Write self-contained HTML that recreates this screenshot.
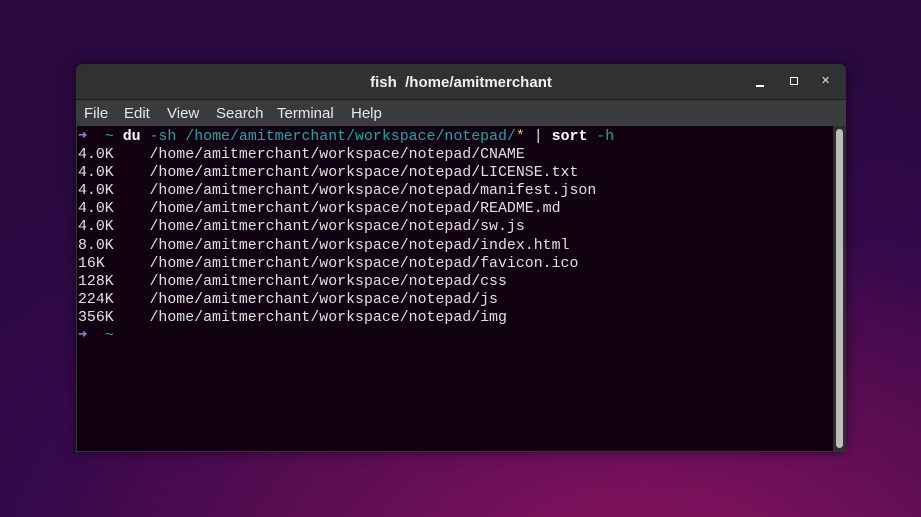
<!DOCTYPE html>
<html><head><style>
body{margin:0;width:921px;height:517px;overflow:hidden;position:relative;
background:radial-gradient(ellipse 900px 500px at 70% 110%,#8a1460 0%,#5a0d52 40%,#35094a 70%,#2a0940 100%);
font-family:"Liberation Sans",sans-serif;}
.win{position:absolute;left:76px;top:64px;width:770px;height:388px;border-radius:6px 6px 0 0;overflow:hidden;box-shadow:0 0 12px rgba(0,0,0,.5);}
.title{height:36px;background:#2f3132;color:#f2f2f2;font-weight:bold;font-size:15px;text-align:center;line-height:38px;border-bottom:1px solid #1e1f20;box-sizing:border-box;}
.menu{height:26px;background:#393b3c;color:#e8e8e8;font-size:15px;line-height:27px;padding-left:8px;}
.menu span{position:absolute}
.term{position:absolute;top:62px;left:0;right:0;bottom:0;background:#110012;border-left:1px solid #333;border-bottom:1px solid #333;}
pre{margin:0;position:absolute;left:1px;top:2px;font-family:"Liberation Mono",monospace;font-size:14.9px;line-height:18.1px;color:#e0e0e0;}
.sb{position:absolute;right:0;top:0;width:13px;bottom:0;background:#2e2e2e;}
.sb div{position:absolute;left:3px;top:3px;width:7px;bottom:3px;background:#bdbdbd;border-radius:4px;}
.p{color:#ad7fe8;font-weight:bold}.c{color:#1aa8a0}.b{font-weight:bold;color:#fff}
</style></head><body>
<div class="win">
<div class="title">fish&nbsp; /home/amitmerchant</div>
<div style="position:absolute;left:680px;top:21px;width:8px;height:1.5px;background:#fff"></div>
<div style="position:absolute;left:714px;top:13px;width:6px;height:6px;border:1.5px solid #fff"></div>
<div style="position:absolute;left:745px;top:10px;color:#ddd;font-size:11px">✕</div>
<div class="menu"><span style="left:8px">File</span><span style="left:48px">Edit</span><span style="left:91px">View</span><span style="left:140px">Search</span><span style="left:201px">Terminal</span><span style="left:275px">Help</span></div>
<div class="term">
<pre><span class="p">➜</span>  <span class="c">~</span> <span class="b">du</span> <span class="c">-sh /home/amitmerchant/workspace/notepad/</span><span style="color:#e8c74a">*</span> | <span class="b">sort</span> <span class="c">-h</span>
4.0K	/home/amitmerchant/workspace/notepad/CNAME
4.0K	/home/amitmerchant/workspace/notepad/LICENSE.txt
4.0K	/home/amitmerchant/workspace/notepad/manifest.json
4.0K	/home/amitmerchant/workspace/notepad/README.md
4.0K	/home/amitmerchant/workspace/notepad/sw.js
8.0K	/home/amitmerchant/workspace/notepad/index.html
16K	/home/amitmerchant/workspace/notepad/favicon.ico
128K	/home/amitmerchant/workspace/notepad/css
224K	/home/amitmerchant/workspace/notepad/js
356K	/home/amitmerchant/workspace/notepad/img
<span class="p">➜</span>  <span class="c">~</span></pre>
<div class="sb"><div></div></div>
</div>
</div>
</body></html>
